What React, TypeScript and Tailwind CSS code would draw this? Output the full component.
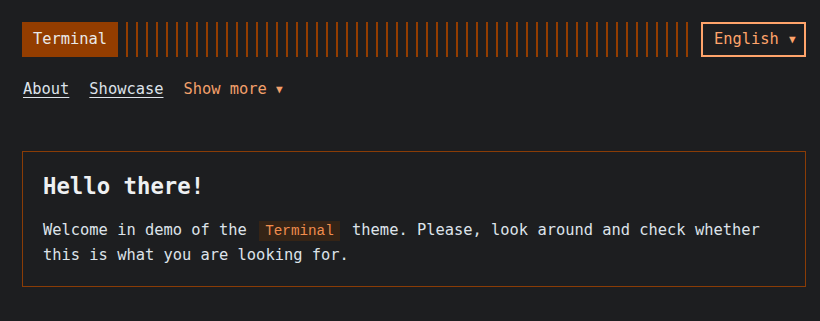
import React from 'react';

const mono = "font-['DejaVu_Sans_Mono','Liberation_Mono',monospace]";

export default function App() {
  return (
    <div className={`min-h-[321px] bg-[#1d1e20] text-[#dde3ea] ${mono} text-[15.4px] leading-[1.62]`}>
      <div className="w-[784px] ml-[22px] pt-[22px]">
        {/* Header */}
        <header className="flex items-center h-[35px]">
          <div className="h-[35px] px-[11px] flex items-center bg-[#933d00] text-[#e9e9e9] shrink-0">
            Terminal
          </div>
          <div className="ml-[8px] h-[35px] w-[562px] bg-[repeating-linear-gradient(90deg,#933d00_0,#933d00_2px,transparent_2px,transparent_10px)]" />
          <button className="ml-auto h-[35px] w-[105px] border-2 border-[#ffa46b] text-[#ffa46b] flex items-center pl-[11px] gap-[10px]">
            <span>English</span>
            <span className="text-[11px]">▼</span>
          </button>
        </header>

        {/* Menu */}
        <nav className="flex items-center gap-[20px] mt-[20px] pl-[1px]">
          <a className="underline underline-offset-[3px] text-[#dde3ea]">About</a>
          <a className="underline underline-offset-[3px] text-[#dde3ea]">Showcase</a>
          <span className="text-[#f3a06b] flex items-center gap-[9px]">
            Show more <span className="text-[11px]">▼</span>
          </span>
        </nav>

        {/* Card */}
        <div className="mt-[49px] border border-[#8a3c06] px-[20px] pt-[20px] pb-[18px]">
          <h1 className="text-[22.3px] font-bold leading-[1.3] text-[#eef0f2]">Hello there!</h1>
          <p className="mt-[17px]">
            Welcome in demo of the{' '}
            <code className="bg-[#352416] text-[#f08d4e] text-[14.3px] px-[6px] py-[2px] mx-[3px]">Terminal</code>{' '}
            theme. Please, look around and check whether this is what you are looking for.
          </p>
        </div>
      </div>
    </div>
  );
}
